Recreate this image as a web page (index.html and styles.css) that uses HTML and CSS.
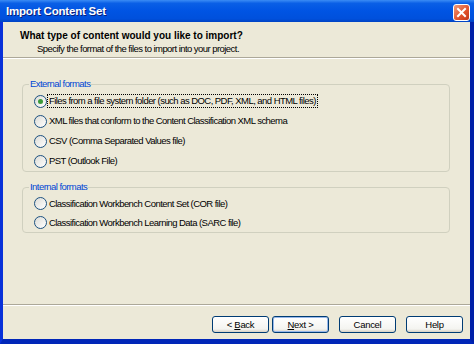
FILE: index.html
```html
<!DOCTYPE html>
<html lang="en">
<head>
    <meta charset="UTF-8">
    <title>Import Content Set</title>
    <link rel="stylesheet" href="styles.css">
</head>
<body>
    <div class="window">
        <div class="titlebar">
            <span class="title">Import Content Set</span>
            <span class="close">
                <svg width="13" height="13" viewBox="0 0 13 13">
                    <path d="M3 3 L10 10 M10 3 L3 10" stroke="#fff" stroke-width="2" stroke-linecap="square"/>
                </svg>
            </span>
        </div>

        <div class="header">
            <h1>What type of content would you like to import?</h1>
            <p>Specify the format of the files to import into your project.</p>
        </div>

        <div class="content">
            <fieldset class="group">
                <legend>External formats</legend>
                <label class="option"><span class="radio checked"></span><span class="text focus">Files from a file system folder (such as DOC, PDF, XML, and HTML files)</span></label>
                <label class="option"><span class="radio"></span><span class="text">XML files that conform to the Content Classification XML schema</span></label>
                <label class="option"><span class="radio"></span><span class="text">CSV (Comma Separated Values file)</span></label>
                <label class="option"><span class="radio"></span><span class="text">PST (Outlook File)</span></label>
            </fieldset>

            <fieldset class="group internal">
                <legend>Internal formats</legend>
                <label class="option"><span class="radio"></span><span class="text">Classification Workbench Content Set (COR file)</span></label>
                <label class="option"><span class="radio"></span><span class="text">Classification Workbench Learning Data (SARC file)</span></label>
            </fieldset>
        </div>

        <div class="footer">
            <button class="btn">&lt; <u>B</u>ack</button>
            <button class="btn default"><u>N</u>ext &gt;</button>
            <button class="btn gap">Cancel</button>
            <button class="btn gap">Help</button>
        </div>
    </div>
</body>
</html>
```

FILE: styles.css
```css
body {
    margin: 0;
    font-family: "Liberation Sans", Arial, sans-serif;
    font-size: 9.5px;
    letter-spacing: -0.55px;
    background: #ece9d8;
}
.window {
    width: 474px;
    height: 344px;
    box-sizing: border-box;
    display: flex;
    flex-direction: column;
    background: #ece9d8;
    border-left: 3px solid #0831d9;
    border-right: 4px solid #0020a8;
    border-bottom: 5px solid #0026b8;
}
.titlebar {
    height: 22px;
    margin: 0 -4px 0 -3px;
    padding: 0 4px 0 6px;
    display: flex;
    align-items: center;
    justify-content: space-between;
    background: linear-gradient(#3b8cf5 0%, #0a5fe6 15%, #0054e3 50%, #0050dc 85%, #0043c4 100%);
}
.title {
    color: #fff;
    font-weight: bold;
    font-size: 11.5px;
    letter-spacing: -0.2px;
    text-shadow: 1px 1px #0a1e7a;
}
.close {
    width: 17px;
    height: 17px;
    border: 1px solid #fff;
    border-radius: 3px;
    background: linear-gradient(135deg, #f09a7a, #e0512a 60%, #c1361a);
    display: flex;
    align-items: center;
    justify-content: center;
    box-sizing: border-box;
    margin-top: 2px;
}
.header {
    height: 36px;
    padding: 7px 0 0 17px;
    box-sizing: border-box;
    border-bottom: 1px solid #aca899;
    box-shadow: 0 1px #fff;
}
.header h1 {
    margin: 0;
    font-size: 10px;
    font-weight: bold;
    letter-spacing: 0;
    line-height: 13px;
}
.header p {
    margin: 0;
    padding-left: 17px;
    line-height: 13px;
}
.content {
    flex: 1;
    padding: 22px 20px 0 19px;
}
.group {
    margin: 0 0 11px 0;
    padding: 3px 0 0 11px;
    border: 1px solid #d0d0bf;
    border-radius: 4px;
}
.group.internal {
    padding-top: 3px;
    padding-bottom: 0;
}
.group legend {
    color: #0046d5;
    padding: 0 1px;
    margin-left: -5px;
    line-height: 8px;
}
.option {
    display: flex;
    align-items: center;
    height: 20px;
    color: #000;
}
.group.internal .option {
    height: 19px;
}
.radio {
    width: 11px;
    height: 11px;
    border: 1px solid #1c5180;
    border-radius: 50%;
    background: linear-gradient(135deg, #dcdcd6, #fff);
    display: flex;
    align-items: center;
    justify-content: center;
    flex: none;
}
.radio.checked::after {
    content: "";
    width: 5px;
    height: 5px;
    border-radius: 50%;
    background: #3a9a3a;
}
.text {
    padding: 0 1px;
    line-height: 12px;
    border: 1px dotted transparent;
}
.text.focus {
    border-color: #000;
}
.footer {
    height: 35px;
    border-top: 1px solid #aca899;
    box-shadow: inset 0 1px #fff;
    display: flex;
    justify-content: flex-end;
    align-items: flex-start;
    padding: 11px 7px 0 0;
    box-sizing: border-box;
}
.btn {
    width: 57px;
    height: 17px;
    margin-left: 3px;
    padding: 0;
    font: 9.5px "Liberation Sans", Arial, sans-serif;
    letter-spacing: -0.3px;
    color: #000;
    background: linear-gradient(#fff, #f4f4f0 80%, #d6d0c5);
    border: 1px solid #003c74;
    border-radius: 3px;
}
.btn.default {
    box-shadow: inset 0 0 0 1px #98b8ea;
}
.btn.gap {
    margin-left: 10px;
}
```
